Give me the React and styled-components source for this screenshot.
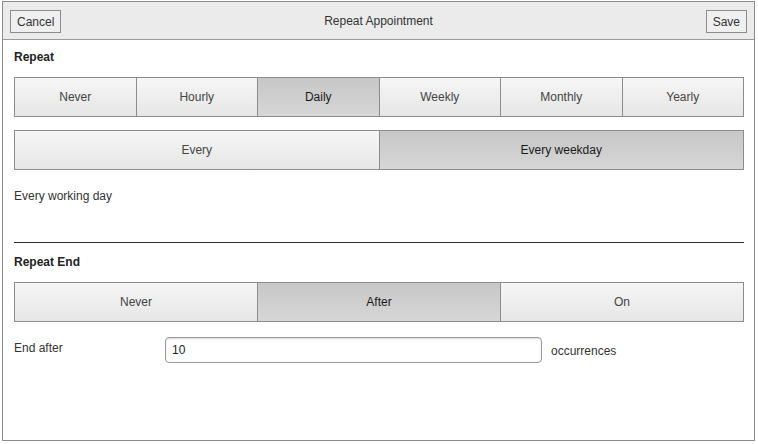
import React from "react";
import styled, { createGlobalStyle } from "styled-components";

const GlobalStyle = createGlobalStyle`
  body {
    margin: 0;
    background: #ffffff;
    font-family: "Liberation Sans", Arial, sans-serif;
    font-size: 12px;
    color: #222;
  }
`;

const repeatOptions = ["Never", "Hourly", "Daily", "Weekly", "Monthly", "Yearly"];
const dailyOptions = ["Every", "Every weekday"];
const endOptions = ["Never", "After", "On"];

function Segmented({ options, selected }) {
  return (
    <SegmentRow>
      {options.map((o) => (
        <Segment key={o} $active={o === selected}>
          {o}
        </Segment>
      ))}
    </SegmentRow>
  );
}

function App() {
  return (
    <>
      <GlobalStyle />
      <Frame>
        <Header>
          <HeaderButton>Cancel</HeaderButton>
          <Title>Repeat Appointment</Title>
          <HeaderButton $end>Save</HeaderButton>
        </Header>

        <Content>
          <SectionTitle>Repeat</SectionTitle>
          <Segmented options={repeatOptions} selected="Daily" />
          <Spacer $h={13} />
          <Segmented options={dailyOptions} selected="Every weekday" />
          <Note>Every working day</Note>
          <Divider />

          <SectionTitle $top={11}>Repeat End</SectionTitle>
          <Segmented options={endOptions} selected="After" />

          <FieldRow>
            <FieldLabel>End after</FieldLabel>
            <NumberInput defaultValue="10" />
            <Suffix>occurrences</Suffix>
          </FieldRow>
        </Content>
      </Frame>
    </>
  );
}

export default App;

const Frame = styled.div`
  box-sizing: border-box;
  margin: 1px 0 0 2px;
  width: 753px;
  height: 440px;
  border: 1px solid #8c8c8c;
  display: flex;
  flex-direction: column;
`;

const Header = styled.div`
  box-sizing: border-box;
  height: 38px;
  padding: 8px 7px 0 7px;
  display: grid;
  grid-template-columns: 1fr auto 1fr;
  align-items: start;
  background: #ebebeb;
  border-bottom: 1px solid #9a9a9a;
`;

const HeaderButton = styled.div`
  box-sizing: border-box;
  height: 23px;
  padding: 0 6px;
  display: flex;
  align-items: center;
  justify-self: ${(p) => (p.$end ? "end" : "start")};
  border: 1px solid #8c8c8c;
  background: #efefef;
  color: #333;
  font-size: 12px;
`;

const Title = styled.div`
  line-height: 23px;
  font-size: 12px;
  color: #333;
`;

const Content = styled.div`
  padding: 0 10px 0 11px;
  display: flex;
  flex-direction: column;
`;

const SectionTitle = styled.div`
  margin-top: ${(p) => p.$top ?? 9}px;
  margin-bottom: 12px;
  line-height: 16px;
  font-weight: bold;
  font-size: 12px;
  color: #222;
`;

const SegmentRow = styled.div`
  box-sizing: border-box;
  height: 40px;
  display: flex;
  border: 1px solid #8c8c8c;
`;

const Segment = styled.div`
  flex: 1;
  display: flex;
  align-items: center;
  justify-content: center;
  font-size: 12px;
  color: ${(p) => (p.$active ? "#1a1a1a" : "#444")};
  background: ${(p) =>
    p.$active
      ? "linear-gradient(#c7c7c7, #d6d6d6)"
      : "linear-gradient(#f6f6f6, #e6e6e6)"};
  & + & {
    border-left: 1px solid #8c8c8c;
  }
`;

const Spacer = styled.div`
  height: ${(p) => p.$h}px;
`;

const Note = styled.div`
  margin-top: 18px;
  line-height: 16px;
  font-size: 12px;
  color: #333;
`;

const Divider = styled.div`
  margin-top: 38px;
  height: 1px;
  background: #333;
`;

const FieldRow = styled.div`
  margin-top: 15px;
  display: flex;
  align-items: flex-start;
`;

const FieldLabel = styled.div`
  width: 151px;
  margin-top: 3px;
  line-height: 16px;
  font-size: 12px;
  color: #333;
`;

const NumberInput = styled.input`
  box-sizing: border-box;
  width: 377px;
  height: 26px;
  padding: 0 6px;
  border: 1px solid #9a9a9a;
  border-radius: 4px;
  box-shadow: inset 0 1px 2px rgba(0, 0, 0, 0.15);
  font-family: "Liberation Sans", Arial, sans-serif;
  font-size: 12px;
  color: #222;
  outline: none;
`;

const Suffix = styled.div`
  margin: 6px 0 0 9px;
  line-height: 16px;
  font-size: 12px;
  color: #333;
`;
